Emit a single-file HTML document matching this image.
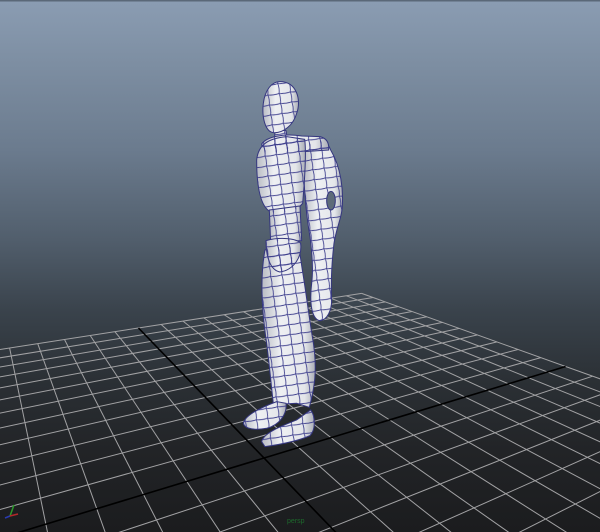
<!DOCTYPE html>
<html><head><meta charset="utf-8"><style>
html,body{margin:0;padding:0;width:600px;height:532px;overflow:hidden;background:#1c1d1f}
#v{position:absolute;left:0;top:0;width:600px;height:532px;
background:linear-gradient(to bottom,#5a6878 0px,#5a6878 1px,#8a9cb2 2px,#7e8fa3 60px,#6b7b8e 150px,#515e6c 240px,#3a434c 310px,#2b3035 380px,#222427 450px,#1b1c1e 532px)}
svg{position:absolute;left:0;top:0;overflow:hidden}
#lbl{position:absolute;left:287px;top:518px;font:7px/8px "Liberation Sans",sans-serif;color:#1d6a2c}
</style></head><body>
<div id="v"></div>
<svg id="g" width="600" height="532"></svg>
<svg width="600" height="532">
<defs>
<pattern id="mesh" width="34" height="30" patternUnits="userSpaceOnUse" patternTransform="rotate(-8)">
<path d="M0,0 Q17,4 34,0 M0,30 Q17,34 34,30" stroke="#3b3c8c" stroke-width="2.6" fill="none"/>
<path d="M0,0 Q4,15 0,30 M34,0 Q38,15 34,30" stroke="#3b3c8c" stroke-width="2.6" fill="none"/>
</pattern>
<linearGradient id="sh" x1="0" y1="0" x2="1" y2="0">
<stop offset="0" stop-color="#b9bcc4"/><stop offset=".35" stop-color="#eef0f3"/><stop offset=".8" stop-color="#e4e6ea"/><stop offset="1" stop-color="#a9acb5"/>
</linearGradient>
<g id="shapes">
<path d="M222,240 C240,200 290,205 302,240 C332,290 342,360 336,420 C332,450 318,480 312,520 C305,580 302,630 305,690 C305,720 292,752 268,752 C245,745 238,700 245,640 C250,600 248,560 240,500 C228,430 218,330 222,240Z"/>
<path d="M135,180 L168,182 L178,240 L132,246 Z"/>
<path d="M95,222 C110,200 160,190 215,198 L270,200 C290,205 298,220 296,240 L222,245 L100,250 Z"/>
<path d="M80,270 C85,220 120,205 170,200 L224,208 C230,250 224,330 218,400 C200,425 150,435 120,425 C95,410 80,360 80,270 Z"/>
<path d="M118,420 L210,408 L215,512 L122,515 Z"/>
<path d="M105,540 C90,620 95,720 110,820 C120,900 125,960 130,1000 L160,1002 L200,1000 L238,1012 C252,960 265,900 247,800 C237,740 227,660 217,600 L205,520 Z"/>
<path d="M108,512 C150,500 200,505 212,520 C217,560 192,600 150,606 C120,600 108,560 108,512 Z"/>
<path d="M40,1060 C45,1035 100,1010 140,995 L168,1000 C172,1030 150,1065 110,1075 C80,1080 45,1080 40,1060Z"/>
<path d="M95,1115 C100,1090 150,1070 200,1050 L242,1020 C257,1040 257,1080 240,1097 C200,1115 140,1125 105,1130 Z"/>
<path d="M150,35 C200,35 215,90 200,130 C190,165 160,190 130,188 C105,185 95,140 100,100 C105,60 125,35 150,35Z"/>
</g>
</defs>
<g transform="translate(230,70) scale(0.3333)">
<use href="#shapes" fill="url(#sh)" stroke="#34367e" stroke-width="3"/>
<use href="#shapes" fill="url(#mesh)"/>
<ellipse cx="303" cy="392" rx="13" ry="28" fill="#5e6b79" stroke="#34367e" stroke-width="3"/>
</g>
<g stroke-width="1.5">
<line x1="10" y1="516" x2="14" y2="505" stroke="#2a9a2a"/>
<line x1="10" y1="516" x2="5" y2="518" stroke="#2a3ab0"/>
<line x1="10" y1="516" x2="18" y2="514" stroke="#b02a2a"/>
</g>
</svg>
<div id="lbl">persp</div>
<script>
var O=[264,458],A=[138.5,328],C=[361.6,293.4],B=[565.6,366.5];
var x0=O[0],y0=O[1],x1=A[0],y1=A[1],x2=C[0],y2=C[1],x3=B[0],y3=B[1];
var dx1=x1-x2,dx2=x3-x2,dx3=x0-x1+x2-x3,dy1=y1-y2,dy2=y3-y2,dy3=y0-y1+y2-y3;
var den=dx1*dy2-dx2*dy1,g=(dx3*dy2-dx2*dy3)/den,h=(dx1*dy3-dx3*dy1)/den;
var a=x1-x0+g*x1,b=x3-x0+h*x3,c=x0,d=y1-y0+g*y1,e=y3-y0+h*y3,f=y0;
function P(s,t){var w=g*s+h*t+1;return [(a*s+b*t+c)/w,(d*s+e*t+f)/w,w];}
var N=12,out='';
function seg(fn,col,sw){
 var ok=[];for(var i=0;i<=200;i++){var u=-1+i/100;var p=fn(u);if(p[2]>0.03)ok.push(u);}
 if(ok.length<2)return;var p1=fn(ok[0]),p2=fn(ok[ok.length-1]);
 out+='<line x1="'+p1[0].toFixed(1)+'" y1="'+p1[1].toFixed(1)+'" x2="'+p2[0].toFixed(1)+'" y2="'+p2[1].toFixed(1)+'" stroke="'+col+'" stroke-width="'+sw+'"/>';
}
for(var i=-N;i<=N;i++){if(i==0)continue;var s=i/N;
 seg(function(t){return P(s,t)},'#a2a2a4',1);
 seg(function(t){return P(t,s)},'#a2a2a4',1);}
seg(function(t){return P(0,t)},'#000',1.6);
seg(function(t){return P(t,0)},'#000',1.6);
document.getElementById('g').innerHTML=out;
</script>
</body></html>
